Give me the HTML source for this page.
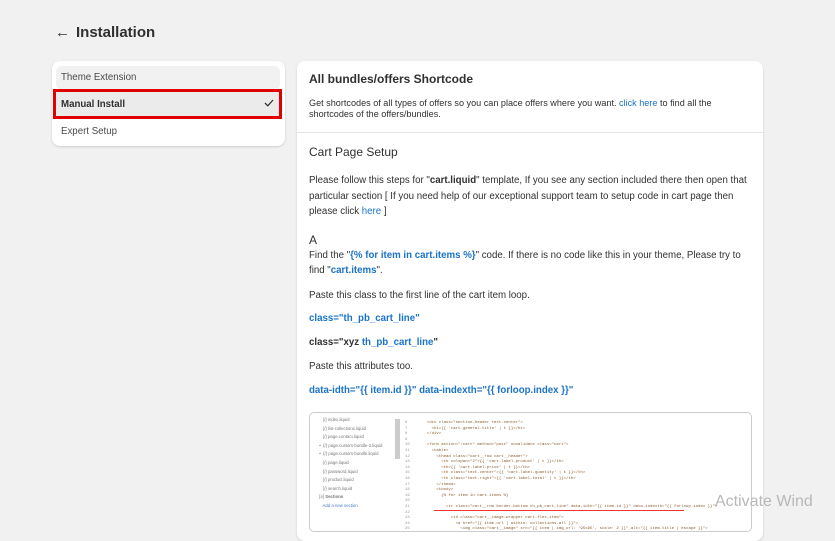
<!DOCTYPE html>
<html><head><meta charset="utf-8"><style>
*{box-sizing:border-box;margin:0;padding:0}
body{width:835px;height:521px;overflow:hidden;background:#f1f1f1;font-family:"Liberation Sans",sans-serif;color:#303030;position:relative}
.abs{position:absolute}
.t{font-size:9.7px;white-space:nowrap}
.s{font-size:9.1px}
.b{color:#1a73c8}
.hd{font-size:12px;font-weight:bold;color:#303030}
.code{font-family:"Liberation Mono",monospace;font-size:4px;color:#8a5a2a;white-space:pre;line-height:5.6px}
</style></head><body>
<div class="abs" style="left:55px;top:24px;font-size:15px;color:#303030">&#8592;</div>
<div class="abs" style="left:76px;top:24px;font-size:15px;font-weight:bold;color:#303030">Installation</div>

<div class="abs" style="left:52px;top:61px;width:233px;height:85px;background:#fff;border-radius:8px;box-shadow:0 1px 2px rgba(0,0,0,.15)"></div>
<div class="abs" style="left:56px;top:66px;width:224px;height:24px;background:#f1f1f1;border-radius:6px"></div>
<div class="abs t" style="left:61px;top:72px;color:#4a4a4a">Theme Extension</div>
<div class="abs" style="left:53px;top:89px;width:229px;height:30px;border:3px solid #e00000;background:#ebebeb"></div>
<div class="abs t" style="left:61px;top:99px;font-weight:bold">Manual Install</div>
<svg class="abs" style="left:264px;top:99px" width="10" height="8"><path d="M1 4 L3.8 6.8 L9 1" stroke="#333" stroke-width="1.3" fill="none"/></svg>
<div class="abs t" style="left:61px;top:126px;color:#4a4a4a">Expert Setup</div>

<div class="abs" style="left:297px;top:61px;width:466px;height:480px;background:#fff;border-radius:8px;box-shadow:0 1px 2px rgba(0,0,0,.15)"></div>
<div class="abs hd" style="left:309px;top:72px">All bundles/offers Shortcode</div>
<div class="abs t s" style="left:309px;top:98px">Get shortcodes of all types of offers so you can place offers where you want. <span class="b">click here</span> to find all the</div>
<div class="abs t s" style="left:309px;top:109px">shortcodes of the offers/bundles.</div>
<div class="abs" style="left:297px;top:132px;width:466px;height:1px;background:#e3e3e3"></div>
<div class="abs" style="left:309px;top:145px;font-size:12px;color:#303030">Cart Page Setup</div>
<div class="abs t" style="left:309px;top:175px">Please follow this steps for "<b>cart.liquid</b>" template, If you see any section included there then open that</div>
<div class="abs t" style="left:309px;top:191px">particular section [ If you need help of our exceptional support team to setup code in cart page then</div>
<div class="abs t" style="left:309px;top:206px">please click <span class="b">here</span> ]</div>
<div class="abs" style="left:309px;top:233px;font-size:12px">A</div>
<div class="abs t" style="left:309px;top:250px">Find the "<b class="b">{% for item in cart.items %}</b>" code. If there is no code like this in your theme, Please try to</div>
<div class="abs t" style="left:309px;top:265px">find "<b class="b">cart.items</b>".</div>
<div class="abs t" style="left:309px;top:290px">Paste this class to the first line of the cart item loop.</div>
<div class="abs t b" style="left:309px;top:313px;font-weight:bold">class="th_pb_cart_line"</div>
<div class="abs t" style="left:309px;top:337px;font-weight:bold">class="xyz <span class="b">th_pb_cart_line</span>"</div>
<div class="abs t" style="left:309px;top:361px">Paste this attributes too.</div>
<div class="abs t b" style="left:309px;top:385px;font-weight:bold">data-idth="{{ item.id }}" data-indexth="{{ forloop.index }}"</div>

<div class="abs" style="left:309px;top:412px;width:443px;height:120px;border:1px solid #ccc;border-radius:5px;background:#fff;overflow:hidden">
 <div class="abs" style="left:8px;top:3px;font-size:4.3px;color:#777;line-height:8.6px;white-space:pre">    {/} index.liquid
    {/} list-collections.liquid
    {/} page.contact.liquid
 •  {/} page.custom-bundle-2.liquid
 •  {/} page.custom-bundle.liquid
    {/} page.liquid
    {/} password.liquid
    {/} product.liquid
    {/} search.liquid
 [≡] <b>Sections</b>
    <span style="color:#4a7ac8">Add a new section</span></div>
 <div class="abs" style="left:85px;top:6px;width:5px;height:40px;background:#ccc"></div>
 <div class="abs code" style="left:95px;top:8px;color:#999">6
7
8
9
10
11
12
13
14
15
16
17
18
19
20
21
22
23
24
25</div>
 <div class="abs code" style="left:112px;top:8px">  &lt;div class="section-header text-center"&gt;
    &lt;h1&gt;{{ 'cart.general.title' | t }}&lt;/h1&gt;
  &lt;/div&gt;

  &lt;form action="/cart" method="post" novalidate class="cart"&gt;
    &lt;table&gt;
      &lt;thead class="cart__row cart__header"&gt;
        &lt;th colspan="2"&gt;{{ 'cart.label.product' | t }}&lt;/th&gt;
        &lt;th&gt;{{ 'cart.label.price' | t }}&lt;/th&gt;
        &lt;th class="text-center"&gt;{{ 'cart.label.quantity' | t }}&lt;/th&gt;
        &lt;th class="text-right"&gt;{{ 'cart.label.total' | t }}&lt;/th&gt;
      &lt;/thead&gt;
      &lt;tbody&gt;
        {% for item in cart.items %}

          &lt;tr class="cart__row border-bottom th_pb_cart_line" data-idth="{{ item.id }}" data-indexth="{{ forloop.index }}"&gt;

            &lt;td class="cart__image-wrapper cart-flex-item"&gt;
              &lt;a href="{{ item.url | within: collections.all }}"&gt;
                &lt;img class="cart__image" src="{{ item | img_url: '95x95', scale: 2 }}" alt="{{ item.title | escape }}"&gt;</div>
 <div class="abs" style="left:124px;top:97px;width:250px;height:1px;background:#e33"></div>
</div>
<div class="abs" style="left:715px;top:493px;font-size:16px;color:#b8b8b8;white-space:nowrap">Activate Wind</div>
</body></html>
